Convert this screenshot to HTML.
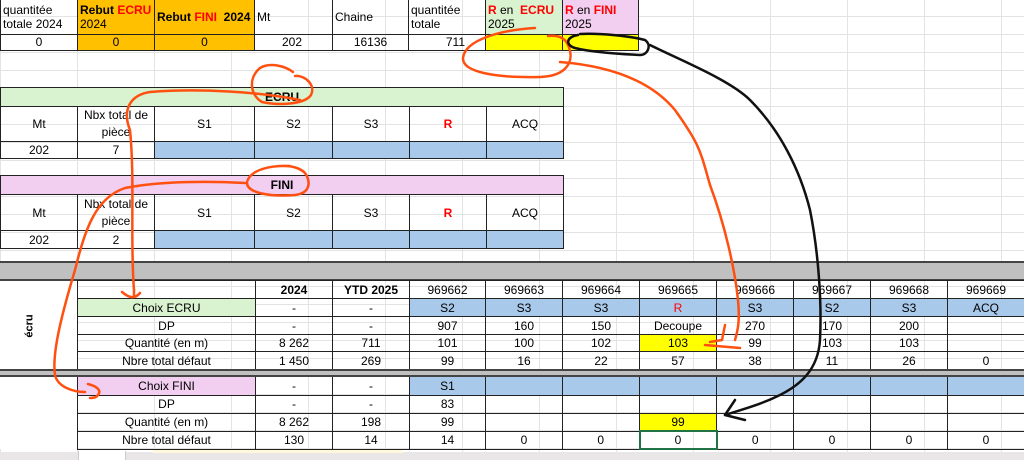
<!DOCTYPE html>
<html><head><meta charset="utf-8"><style>
*{margin:0;padding:0;box-sizing:border-box}
body{width:1024px;height:460px;overflow:hidden;background:#fff;font-family:"Liberation Sans",Arial,sans-serif;font-size:12px;color:#000;position:relative}
.grid{position:absolute;left:0;top:0;width:1024px;height:460px;
background-image:linear-gradient(#e3e3e3 1px,transparent 1px),linear-gradient(90deg,#e3e3e3 1px,transparent 1px);
background-size:77px 18px;background-position:0 -2px}
table{position:absolute;border-collapse:collapse;table-layout:fixed}
td{border:1px solid #222;text-align:center;vertical-align:middle;padding:0 2px;overflow:hidden;white-space:nowrap;line-height:14px}
.l{text-align:left;white-space:normal}
.o{background:#ffc000}.y{background:#ffff00}.g{background:#d9f2d0}.p{background:#f2cef0}.b{background:#a9c9ea}
.r{color:#f00;font-weight:bold}.rr{color:#f00}.bd{font-weight:bold}
.gray{position:absolute;left:0;width:1024px;background:#c0c0c0;border-top:2px solid #444;border-bottom:2px solid #444}
</style></head><body>
<div class="grid"></div>

<table style="left:0;top:0;width:638px">
<colgroup><col style="width:77px"><col style="width:77px"><col style="width:100px"><col style="width:78px"><col style="width:76px"><col style="width:77px"><col style="width:77px"><col style="width:76px"></colgroup>
<tr style="height:34px"><td class="l" style="border-top:0">quantitée totale 2024</td><td class="l o" style="border-top:0"><b>Rebut <span style="color:#f00">ECRU</span></b> 2024</td><td class="l o" style="border-top:0"><b>Rebut <span style="color:#f00">FINI</span>&nbsp; 2024</b></td><td class="l" style="border-top:0">Mt</td><td class="l" style="border-top:0">Chaine</td><td class="l" style="border-top:0">quantitée totale</td><td class="l g" style="border-top:0"><span class="r">R</span> en&nbsp; <span class="r">ECRU</span> 2025</td><td class="l p" style="border-top:0"><span class="r">R</span> en <span class="r">FINI</span> 2025</td></tr>
<tr style="height:16px"><td>0</td><td class="o">0</td><td class="o">0</td><td style="text-align:right;padding-right:30px">202</td><td>16136</td><td style="text-align:right;padding-right:20px">711</td><td class="y"></td><td class="y"></td></tr>
</table>

<table style="left:0;top:87px;width:563px">
<colgroup><col style="width:77px"><col style="width:77px"><col style="width:100px"><col style="width:78px"><col style="width:77px"><col style="width:77px"><col style="width:77px"></colgroup>
<tr style="height:19px"><td colspan="7" class="g bd">ECRU</td></tr>
<tr style="height:34px"><td>Mt</td><td style="white-space:normal;line-height:17px">Nbx total de pièce</td><td>S1</td><td>S2</td><td>S3</td><td class="r">R</td><td>ACQ</td></tr>
<tr style="height:17px"><td>202</td><td>7</td><td class="b"></td><td class="b"></td><td class="b"></td><td class="b"></td><td class="b"></td></tr>
</table>

<table style="left:0;top:175px;width:563px">
<colgroup><col style="width:77px"><col style="width:77px"><col style="width:100px"><col style="width:78px"><col style="width:77px"><col style="width:77px"><col style="width:77px"></colgroup>
<tr style="height:19px"><td colspan="7" class="p bd">FINI</td></tr>
<tr style="height:36px"><td>Mt</td><td style="white-space:normal;line-height:17px">Nbx total de pièce</td><td>S1</td><td>S2</td><td>S3</td><td class="r">R</td><td>ACQ</td></tr>
<tr style="height:18px"><td>202</td><td>2</td><td class="b"></td><td class="b"></td><td class="b"></td><td class="b"></td><td class="b"></td></tr>
</table>

<div class="gray" style="top:261px;height:20px"></div>
<div style="position:absolute;left:0;top:281px;width:77px;height:89px;background:#fff"></div>
<div style="position:absolute;left:18px;top:320px;transform:rotate(-90deg);font-weight:bold;font-size:11px">écru</div>

<table style="left:77px;top:280px;width:947px">
<colgroup><col style="width:178px"><col style="width:77px"><col style="width:77px"><col style="width:76px"><col style="width:77px"><col style="width:77px"><col style="width:77px"><col style="width:77px"><col style="width:77px"><col style="width:77px"><col style="width:77px"></colgroup>
<tr style="height:18px"><td></td><td class="bd">2024</td><td class="bd">YTD 2025</td><td>969662</td><td>969663</td><td>969664</td><td>969665</td><td>969666</td><td>969667</td><td>969668</td><td>969669</td></tr>
<tr style="height:18px"><td class="g">Choix ECRU</td><td>-</td><td>-</td><td class="b">S2</td><td class="b">S3</td><td class="b">S3</td><td class="b rr">R</td><td class="b">S3</td><td class="b">S2</td><td class="b">S3</td><td class="b">ACQ</td></tr>
<tr style="height:18px"><td>DP</td><td>-</td><td>-</td><td>907</td><td>160</td><td>150</td><td>Decoupe</td><td>270</td><td>170</td><td>200</td><td></td></tr>
<tr style="height:17px"><td>Quantité (en m)</td><td>8 262</td><td>711</td><td>101</td><td>100</td><td>102</td><td class="y">103</td><td>99</td><td>103</td><td>103</td><td></td></tr>
<tr style="height:18px"><td>Nbre total défaut</td><td>1 450</td><td>269</td><td>99</td><td>16</td><td>22</td><td>57</td><td>38</td><td>11</td><td>26</td><td>0</td></tr>
</table>

<div class="gray" style="top:369px;height:8px;border-bottom:2px solid #444"></div>
<div style="position:absolute;left:0;top:377px;width:77px;height:72px;background:#fff"></div>

<table style="left:77px;top:377px;width:947px">
<colgroup><col style="width:178px"><col style="width:77px"><col style="width:77px"><col style="width:76px"><col style="width:77px"><col style="width:77px"><col style="width:77px"><col style="width:77px"><col style="width:77px"><col style="width:77px"><col style="width:77px"></colgroup>
<tr style="height:18px"><td class="p" style="border-top:0">Choix FINI</td><td style="border-top:0">-</td><td style="border-top:0">-</td><td class="b" style="border-top:0">S1</td><td class="b" style="border-top:0"></td><td class="b" style="border-top:0"></td><td class="b" style="border-top:0"></td><td class="b" style="border-top:0"></td><td class="b" style="border-top:0"></td><td class="b" style="border-top:0"></td><td class="b" style="border-top:0"></td></tr>
<tr style="height:18px"><td>DP</td><td>-</td><td>-</td><td>83</td><td></td><td></td><td></td><td></td><td></td><td></td><td></td></tr>
<tr style="height:18px"><td>Quantité (en m)</td><td>8 262</td><td>198</td><td>99</td><td></td><td></td><td class="y">99</td><td></td><td></td><td></td><td></td></tr>
<tr style="height:18px"><td>Nbre total défaut</td><td>130</td><td>14</td><td>14</td><td>0</td><td>0</td><td style="border:2px solid #217346">0</td><td>0</td><td>0</td><td>0</td><td>0</td></tr>
</table>

<div style="position:absolute;left:0;top:452px;width:1024px;height:8px;background:#e8e6e6"></div>
<div style="position:absolute;left:78px;top:451px;width:48px;height:9px;background:#fff;border-left:1px solid #ccc;border-right:1px solid #ccc"></div>
<div style="position:absolute;left:153px;top:450px;width:250px;height:3px;background:#fff8dc"></div>

<svg style="position:absolute;left:0;top:0" width="1024" height="460" fill="none" stroke-linecap="round" stroke-linejoin="round">
<g stroke="#ff5010" stroke-width="2.5">
<path d="M535,28 C500,30 465,40 463,58 C462,72 495,78 540,77 C568,76 575,60 568,45 C565,38 558,35 548,36"/>
<path d="M560,62 C610,66 650,80 675,110 C700,145 700,150 710,185 C725,225 735,270 738,300 C740,320 738,330 735,340"/>
<path d="M725,325 L722,340 L710,342 M705,345 L740,348"/>
<path d="M293,72 C285,66 270,62 260,68 C248,78 250,95 262,102 C280,106 305,104 311,95 C316,85 305,75 295,76"/>
<path d="M300,100 C260,92 200,88 150,92 C130,95 122,110 130,130 C135,180 130,240 134,290"/>
<path d="M122,292 C128,297 134,300 140,293 M134,290 L134,297"/>
<path d="M290,166 C270,165 250,170 247,182 C246,193 270,197 295,195 C312,193 310,180 305,173 C300,168 292,166 285,166"/>
<path d="M245,183 C210,181 160,181 125,188 C95,198 85,230 75,270 C60,320 52,355 55,375 C58,388 75,392 85,392"/>
<path d="M88,384 C96,386 102,390 98,395 C96,398 92,398 90,398"/>
</g>
<g stroke="#111" stroke-width="2.5">
<path d="M580,34 C600,33 630,36 645,40 C652,45 648,55 640,55 C620,54 590,52 575,48 C565,45 566,37 578,35"/>
<path d="M650,45 C680,60 730,80 750,100 C780,130 800,170 810,210 C818,250 822,300 820,340 C818,370 800,385 780,395 C760,405 740,410 725,415"/>
<path d="M735,400 L725,415 L745,420"/>
</g>
</svg>
</body></html>
